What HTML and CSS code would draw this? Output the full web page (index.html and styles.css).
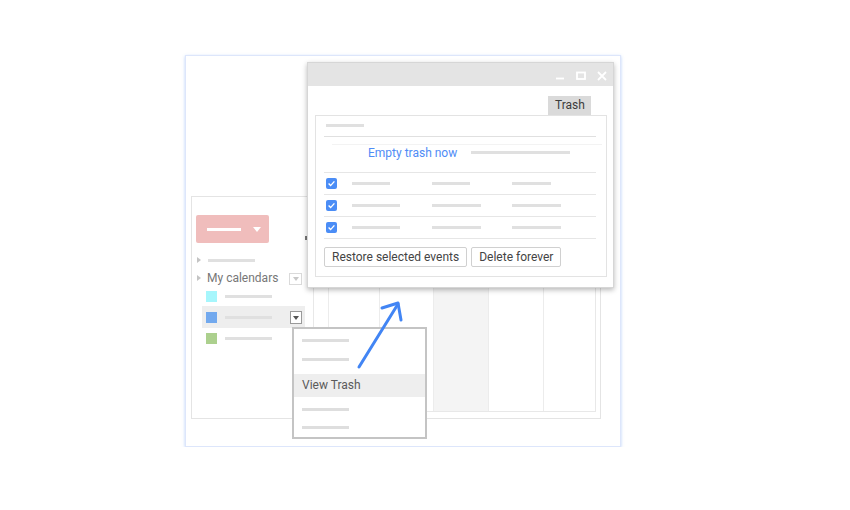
FILE: index.html
```html
<!DOCTYPE html>
<html lang="en">
<head>
    <meta charset="UTF-8">
    <meta name="viewport" content="width=device-width, initial-scale=1.0">
    <title>View Trash</title>
    <link rel="stylesheet" href="styles.css">
</head>
<body>

    <div class="stage">
        <div class="frame">

            <div class="app">
                <aside class="sidebar">
                    <div class="create-btn">
                        <span class="create-bar"></span>
                        <span class="create-caret"></span>
                    </div>
                    <div class="side-row">
                        <span class="tri"></span>
                        <span class="ph ph-side"></span>
                    </div>
                    <div class="side-row">
                        <span class="tri"></span>
                        <span class="side-label">My calendars</span>
                        <span class="mini-drop"><span class="mini-caret"></span></span>
                    </div>
                    <div class="cal-row">
                        <span class="swatch swatch-cyan"></span>
                        <span class="ph ph-cal"></span>
                    </div>
                    <div class="cal-row cal-row-active">
                        <span class="swatch swatch-blue"></span>
                        <span class="ph ph-cal"></span>
                        <span class="mini-drop mini-drop-dark"><span class="mini-caret"></span></span>
                    </div>
                    <div class="cal-row">
                        <span class="swatch swatch-green"></span>
                        <span class="ph ph-cal"></span>
                    </div>
                </aside>

                <section class="main">
                    <div class="toolbar"><span class="nav-tip"></span></div>
                    <div class="week">
                        <div class="day day-time"></div>
                        <div class="day day-1"></div>
                        <div class="day day-2"></div>
                        <div class="day day-3 day-today"></div>
                        <div class="day day-4"></div>
                        <div class="day day-5"></div>
                    </div>
                </section>
            </div>

            <!-- calendar options menu -->
            <div class="menu">
                <div class="menu-line menu-line-1"></div>
                <div class="menu-line menu-line-2"></div>
                <div class="menu-item">View Trash</div>
                <div class="menu-line menu-line-3"></div>
                <div class="menu-line menu-line-4"></div>
            </div>

            <svg class="arrow" width="60" height="80" viewBox="0 0 60 80">
                <path d="M9 72 L48 9" />
                <path d="M32 13 L48 8 L51 25" />
            </svg>

            <!-- trash window -->
            <div class="window">
                <div class="titlebar">
                    <svg class="win-icon" width="10" height="10" viewBox="0 0 10 10"><path d="M1 7.5 H9" /></svg>
                    <svg class="win-icon" width="10" height="10" viewBox="0 0 10 10"><rect x="1" y="1.5" width="8" height="6.5" /></svg>
                    <svg class="win-icon" width="10" height="10" viewBox="0 0 10 10"><path d="M1 1 L9 9 M9 1 L1 9" /></svg>
                </div>

                <div class="tab-row">
                    <span class="tab">Trash</span>
                </div>

                <div class="panel">
                    <div class="panel-head"><span class="ph ph-head"></span></div>
                    <div class="panel-sub">
                        <div class="faint-line"></div>
                        <div class="empty-row">
                            <span class="empty-link">Empty trash now</span>
                            <span class="ph ph-empty"></span>
                        </div>
                    </div>

                    <div class="trash-row">
                        <span class="check"><svg width="11" height="11" viewBox="0 0 11 11"><path d="M2.6 5.6 L4.6 7.6 L8.4 3.4" /></svg></span>
                        <span class="ph ph-38"></span>
                        <span class="ph ph-38"></span>
                        <span class="ph ph-39"></span>
                    </div>
                    <div class="trash-row">
                        <span class="check"><svg width="11" height="11" viewBox="0 0 11 11"><path d="M2.6 5.6 L4.6 7.6 L8.4 3.4" /></svg></span>
                        <span class="ph ph-48"></span>
                        <span class="ph ph-49"></span>
                        <span class="ph ph-49"></span>
                    </div>
                    <div class="trash-row">
                        <span class="check"><svg width="11" height="11" viewBox="0 0 11 11"><path d="M2.6 5.6 L4.6 7.6 L8.4 3.4" /></svg></span>
                        <span class="ph ph-48"></span>
                        <span class="ph ph-49"></span>
                        <span class="ph ph-49"></span>
                    </div>

                    <div class="actions">
                        <button class="btn">Restore selected events</button>
                        <button class="btn">Delete forever</button>
                    </div>
                </div>
            </div>

        </div>
    </div>

</body>
</html>
```

FILE: styles.css
```css
        * {
            box-sizing: border-box;
        }

        body {
            margin: 0;
            background-color: #ffffff;
            font-family: 'Roboto', 'Liberation Sans', sans-serif;
            font-size: 12px;
        }

        .stage {
            padding: 55px 0 0 185px;
        }

        .frame {
            position: relative;
            width: 436px;
            height: 392px;
            background-color: #ffffff;
            border: 1px solid #dde6fb;
            box-shadow: 0 1px 3px rgba(66, 133, 244, 0.35);
        }

        /* placeholder text bars */
        .ph {
            display: block;
            height: 3px;
            background-color: #e0e0e0;
            flex: none;
        }

        /* ---- calendar app behind ---- */
        .app {
            display: flex;
            width: 410px;
            height: 223px;
            margin: 140px 0 0 5px;
            border: 1px solid #e4e4e4;
        }

        .sidebar {
            width: 113px;
            flex: none;
        }

        .create-btn {
            display: flex;
            align-items: center;
            width: 73px;
            height: 28px;
            margin: 18px 0 0 4px;
            padding-left: 11px;
            background-color: #f0bdbc;
            border-radius: 2px;
        }

        .create-bar {
            width: 34px;
            height: 3px;
            background-color: #ffffff;
        }

        .create-caret {
            margin-left: 12px;
            border-top: 5px solid #ffffff;
            border-left: 4px solid transparent;
            border-right: 4px solid transparent;
        }

        .side-row {
            display: flex;
            align-items: center;
            height: 17px;
            padding-left: 5px;
        }

        .side-row:nth-child(2) {
            height: 18px;
            margin-top: 8px;
        }

        .tri {
            width: 0;
            border-left: 4px solid #c4c4c4;
            border-top: 3px solid transparent;
            border-bottom: 3px solid transparent;
            margin-right: 6px;
            flex: none;
        }

        .ph-side {
            width: 47px;
            margin-left: 1px;
        }

        .side-label {
            color: #777777;
            white-space: nowrap;
        }

        .mini-drop {
            display: flex;
            align-items: center;
            justify-content: center;
            width: 13px;
            height: 12px;
            margin: 3px 3px 0 auto;
            border: 1px solid #dadada;
            background-color: #ffffff;
            flex: none;
        }

        .mini-caret {
            border-top: 4px solid #c8c8c8;
            border-left: 3px solid transparent;
            border-right: 3px solid transparent;
        }

        .mini-drop-dark {
            width: 12px;
            height: 13px;
            margin-top: 1px;
            border-color: #9a9a9a;
        }

        .mini-drop-dark .mini-caret {
            border-top-color: #555555;
        }

        .cal-row {
            display: flex;
            align-items: center;
            height: 20px;
            margin-left: 10px;
            padding-left: 4px;
        }

        .cal-row-active {
            height: 22px;
            background-color: #eeeeee;
        }

        .swatch {
            width: 11px;
            height: 11px;
            margin-right: 8px;
            flex: none;
        }

        .swatch-cyan {
            background-color: #a6f6fc;
        }

        .swatch-blue {
            background-color: #72a9ee;
        }

        .swatch-green {
            background-color: #acd08e;
        }

        .ph-cal {
            width: 47px;
        }

        .main {
            flex: 1;
            display: flex;
            flex-direction: column;
        }

        .toolbar {
            height: 53px;
            flex: none;
        }

        .nav-tip {
            display: block;
            width: 2px;
            height: 4px;
            margin-top: 39px;
            background-color: #777777;
        }

        .week {
            flex: 1;
            display: grid;
            grid-template-columns: 14px 51px 54px 55px 55px 52px;
            margin: 0 4px 6px 8px;
            border: 1px solid #e8e8e8;
        }

        .day {
            border-left: 1px solid #ececec;
        }

        .day-time {
            border-left: none;
        }

        .day-today {
            background-color: #f4f4f4;
        }

        /* ---- options menu ---- */
        .menu {
            position: absolute;
            left: 106px;
            top: 271px;
            width: 135px;
            height: 112px;
            background-color: #ffffff;
            border: 2px solid #c4c4c4;
        }

        .menu-line {
            width: 47px;
            height: 3px;
            margin-left: 8px;
            background-color: #dedede;
        }

        .menu-line-1 {
            margin-top: 10px;
        }

        .menu-line-2 {
            margin-top: 16px;
        }

        .menu-item {
            height: 23px;
            margin-top: 13px;
            padding-left: 8px;
            line-height: 23px;
            background-color: #eeeeee;
            color: #5a5a5a;
        }

        .menu-line-3 {
            margin-top: 11px;
        }

        .menu-line-4 {
            margin-top: 15px;
        }

        .arrow {
            position: absolute;
            left: 164px;
            top: 239px;
            fill: none;
            stroke: #4285f4;
            stroke-width: 3;
            stroke-linecap: round;
            stroke-linejoin: round;
        }

        /* ---- trash window ---- */
        .window {
            position: absolute;
            left: 121px;
            top: 6px;
            width: 307px;
            height: 226px;
            background-color: #ffffff;
            border: 1px solid #d6d6d6;
            box-shadow: 0 2px 5px rgba(0, 0, 0, 0.28);
            padding: 0 6px 0 7px;
        }

        .titlebar {
            display: flex;
            justify-content: flex-end;
            gap: 11px;
            height: 23px;
            margin: 0 -6px 0 -7px;
            padding: 8px 6px 0 0;
            background-color: #e4e4e4;
        }

        .win-icon {
            fill: none;
            stroke: #ffffff;
            stroke-width: 1.8;
        }

        .tab-row {
            display: flex;
            justify-content: flex-end;
            padding-top: 10px;
            padding-right: 16px;
        }

        .tab {
            display: block;
            width: 43px;
            height: 19px;
            padding-left: 7px;
            line-height: 19px;
            background-color: #dadada;
            color: #3c3c3c;
        }

        .panel {
            height: 162px;
            padding: 0 10px 0 8px;
            border: 1px solid #e3e3e3;
        }

        .panel-head {
            height: 21px;
            padding: 8px 0 0 2px;
            border-bottom: 1px solid #e0e0e0;
        }

        .ph-head {
            width: 38px;
        }

        .panel-sub {
            height: 36px;
            padding-top: 7px;
            border-bottom: 1px solid #e6e6e6;
        }

        .faint-line {
            margin: 0 -6px 0 8px;
            border-top: 1px solid #f3f3f3;
        }

        .empty-row {
            display: flex;
            align-items: center;
            height: 16px;
            margin-top: 0;
            padding-left: 44px;
        }

        .empty-link {
            color: #4f8cf6;
            white-space: nowrap;
        }

        .ph-empty {
            width: 99px;
            margin-left: auto;
            margin-right: 26px;
            margin-top: -2px;
        }

        .trash-row {
            display: grid;
            grid-template-columns: 28px 80px 80px 1fr;
            align-items: center;
            height: 22px;
            border-bottom: 1px solid #e6e6e6;
        }

        .check {
            display: flex;
            width: 11px;
            height: 11px;
            margin-left: 2px;
            border-radius: 2px;
            background-color: #4b8df6;
        }

        .check svg {
            fill: none;
            stroke: #ffffff;
            stroke-width: 1.4;
        }

        .ph-38 {
            width: 38px;
        }

        .ph-39 {
            width: 39px;
        }

        .ph-48 {
            width: 48px;
        }

        .ph-49 {
            width: 49px;
        }

        .actions {
            display: flex;
            gap: 4px;
            margin-top: 8px;
        }

        .btn {
            height: 20px;
            padding: 0 7px;
            border: 1px solid #d0d0d0;
            border-radius: 2px;
            background-color: #ffffff;
            color: #444444;
            font-family: 'Roboto', 'Liberation Sans', sans-serif;
            font-size: 12px;
        }
```
